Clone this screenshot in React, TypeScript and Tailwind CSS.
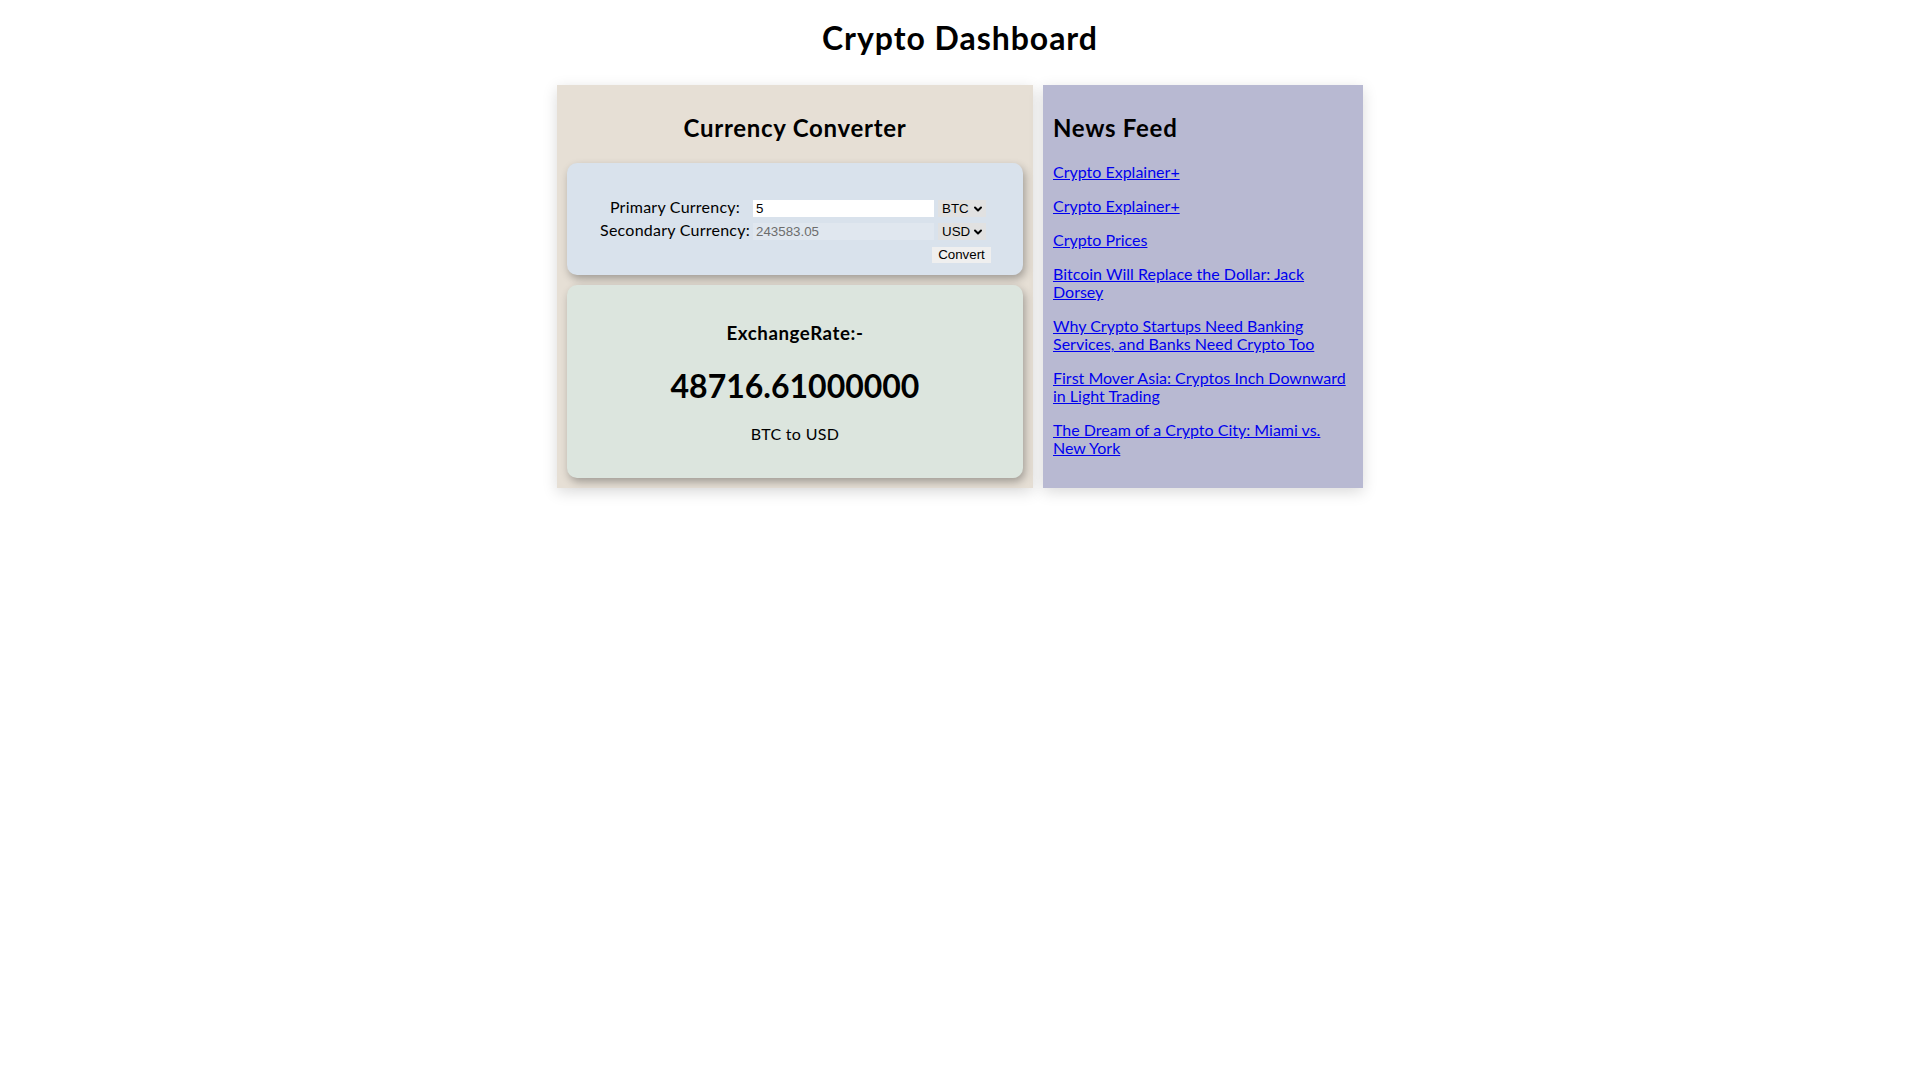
import { ChevronDown } from "lucide-react";

const news = [
  "Crypto Explainer+",
  "Crypto Explainer+",
  "Crypto Prices",
  "Bitcoin Will Replace the Dollar: Jack Dorsey",
  "Why Crypto Startups Need Banking Services, and Banks Need Crypto Too",
  "First Mover Asia: Cryptos Inch Downward in Light Trading",
  "The Dream of a Crypto City: Miami vs. New York",
];

function FakeSelect({ value }: { value: string }) {
  return (
    <div className="flex h-[17px] w-[48px] items-center justify-between bg-[#e1e1e1] pl-[4px] pr-[2px] font-['Liberation_Sans',Arial,sans-serif] text-[13.33px] text-black">
      <span>{value}</span>
      <ChevronDown size={12} strokeWidth={4} />
    </div>
  );
}

function CurrencyConverter() {
  return (
    <div className="w-[476px] bg-[#e6dfd5] p-[10px] shadow-[0_4px_14px_rgba(0,0,0,0.15)]">
      <h2 className="mt-[19px] text-center text-[24px] leading-[28px] font-bold tracking-[0.03em]">
        Currency Converter
      </h2>

      <div className="mt-[21px] rounded-[10px] bg-[#d9e2ec] pt-[37px] pb-[12px] shadow-[2px_4px_8px_rgba(0,0,0,0.3)]">
        <div className="mx-auto w-[390px]">
          <div className="flex h-[17px] items-center">
            <label className="flex w-[150px] justify-center whitespace-nowrap pb-[3px] text-[16px] tracking-[0.015em]">
              Primary Currency:
            </label>
            <input
              className="ml-[3px] h-[17px] w-[181px] bg-white px-[3px] font-['Liberation_Sans',Arial,sans-serif] text-[13.33px] text-black outline-none"
              defaultValue="5"
            />
            <div className="ml-[4px]">
              <FakeSelect value="BTC" />
            </div>
          </div>
          <div className="mt-[6px] flex h-[17px] items-center">
            <label className="flex w-[150px] justify-center whitespace-nowrap pb-[3px] text-[16px] tracking-[0.015em]">
              Secondary Currency:
            </label>
            <input
              disabled
              className="ml-[3px] h-[17px] w-[181px] bg-[#e0e7ef] px-[3px] font-['Liberation_Sans',Arial,sans-serif] text-[13.33px] text-[#6d6d6d] outline-none"
              defaultValue="243583.05"
            />
            <div className="ml-[4px]">
              <FakeSelect value="USD" />
            </div>
          </div>
          <div className="mt-[7px] flex justify-end">
            <button className="-mr-[1px] h-[16px] w-[59px] bg-[#efefef] font-['Liberation_Sans',Arial,sans-serif] text-[13.33px] leading-[16px] text-black">
              Convert
            </button>
          </div>
        </div>
      </div>

      <div className="mt-[10px] rounded-[10px] bg-[#dce5de] pt-[37px] pb-[34px] text-center shadow-[2px_4px_8px_rgba(0,0,0,0.3)]">
        <h3 className="text-[18.72px] leading-[22px] font-bold tracking-[0.03em]">ExchangeRate:-</h3>
        <h1 className="mt-[22px] text-[32px] leading-[40px] font-bold">48716.61000000</h1>
        <p className="mt-[18px] text-[16px] leading-[20px] tracking-[0.02em]">BTC to USD</p>
      </div>
    </div>
  );
}

function NewsFeed() {
  return (
    <div className="w-[320px] bg-[#b8b9d2] p-[10px] shadow-[0_4px_14px_rgba(0,0,0,0.15)]">
      <h2 className="mt-[19px] text-[24px] leading-[28px] font-bold tracking-[0.03em]">News Feed</h2>
      <div className="mt-[21px] flex flex-col gap-[16px]">
        {news.map((title, i) => (
          <p key={i} className="text-[16px] leading-[18px]">
            <a href="#" className="text-[#0000ee] underline">
              {title}
            </a>
          </p>
        ))}
      </div>
    </div>
  );
}

export default function App() {
  return (
    <div className="min-h-screen bg-white font-['Lato',sans-serif] text-black">
      <h1 className="pt-[18px] text-center text-[32px] leading-[40px] font-bold tracking-[0.03em]">
        Crypto Dashboard
      </h1>
      <div className="mt-[27px] flex justify-center gap-[10px]">
        <CurrencyConverter />
        <NewsFeed />
      </div>
    </div>
  );
}
